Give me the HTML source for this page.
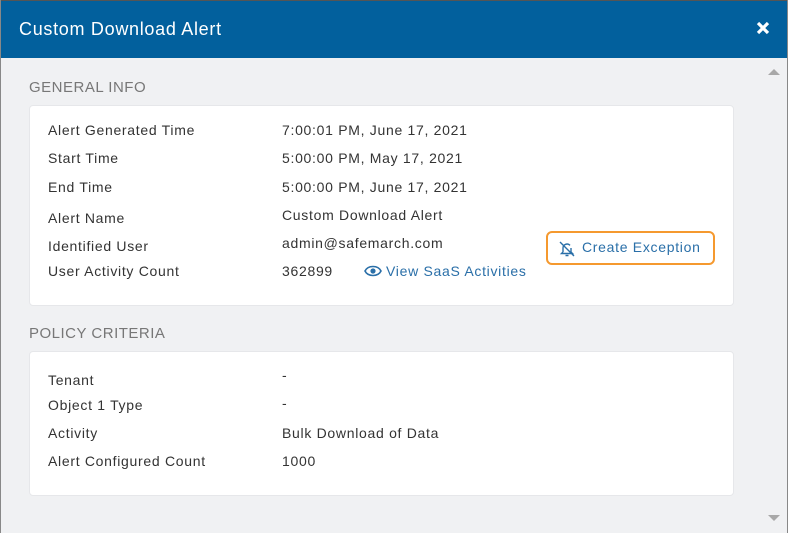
<!DOCTYPE html>
<html><head><style>
body{margin:0;width:788px;height:533px;overflow:hidden;background:#f0f1f3;font-family:"Liberation Sans",sans-serif;position:relative}
.hdr{position:absolute;left:0;top:0;width:788px;height:58px;background:#02609d;border-top:1px solid #555;box-sizing:border-box}
.hdr .t{position:absolute;left:19px;top:18px;color:#fff;font-size:18px;letter-spacing:.7px}
.x{position:absolute;left:755px;top:19px}
.sec{position:absolute;left:29px;color:#777;font-size:15px;letter-spacing:.5px}
.card{position:absolute;left:29px;width:705px;background:#fff;border-radius:4px;border:1px solid #e6e7ea;box-sizing:border-box}
.r{position:absolute;font-size:14px;color:#333;letter-spacing:.7px;white-space:nowrap}
.l{left:18px}.v{left:252px}
.link{color:#2a6fa8}
.btn{position:absolute;left:516px;top:125px;width:169px;height:34px;border:2px solid #f5992f;border-radius:6px;box-sizing:border-box}
</style></head><body>
<div class="hdr"><div class="t">Custom Download Alert</div>
<svg class="x" width="16" height="16" viewBox="0 0 16 16"><path d="M3 3L13 13M13 3L3 13" stroke="#fff" stroke-width="3.2"/></svg></div>
<svg style="position:absolute;left:768px;top:68px" width="12" height="8"><path d="M0 7L6 1L12 7Z" fill="#a8a8a8"/></svg>
<svg style="position:absolute;left:768px;top:514px" width="12" height="8"><path d="M0 1L6 7L12 1Z" fill="#a8a8a8"/></svg>
<div class="sec" style="top:79px">GENERAL INFO</div>
<div class="card" style="top:105px;height:201px">
<div class="r l" style="top:16px">Alert Generated Time</div><div class="r v" style="top:16px">7:00:01 PM, June 17, 2021</div>
<div class="r l" style="top:44px">Start Time</div><div class="r v" style="top:44px">5:00:00 PM, May 17, 2021</div>
<div class="r l" style="top:73px">End Time</div><div class="r v" style="top:73px">5:00:00 PM, June 17, 2021</div>
<div class="r l" style="top:104px">Alert Name</div><div class="r v" style="top:101px">Custom Download Alert</div>
<div class="r l" style="top:132px">Identified User</div><div class="r v" style="top:129px">admin@safemarch.com</div>
<div class="r l" style="top:157px">User Activity Count</div><div class="r v" style="top:157px">362899</div>
<svg style="position:absolute;left:334px;top:158px" width="18" height="14" viewBox="0 0 18 14"><path d="M1 7C4 1 14 1 17 7C14 13 4 13 1 7Z" fill="none" stroke="#2a6fa8" stroke-width="1.6"/><circle cx="9" cy="7" r="2.6" fill="#2a6fa8"/></svg>
<div class="r link" style="left:356px;top:157px">View SaaS Activities</div>
<div class="btn">
<svg style="position:absolute;left:10px;top:7px" width="18" height="18" viewBox="0 0 18 18" fill="none" stroke="#2a6fa8" stroke-width="1.4"><path d="M5 12V8a4 4 0 0 1 7-2.6M13 8v4l1.5 1.5h-11L5 12M7.5 15.5h3M2 2l14 14"/></svg>
<div class="r link" style="left:34px;top:6px">Create Exception</div></div>
</div>
<div class="sec" style="top:325px">POLICY CRITERIA</div>
<div class="card" style="top:351px;height:145px">
<div class="r l" style="top:20px">Tenant</div><div class="r v" style="top:15px">-</div>
<div class="r l" style="top:45px">Object 1 Type</div><div class="r v" style="top:43px">-</div>
<div class="r l" style="top:73px">Activity</div><div class="r v" style="top:73px">Bulk Download of Data</div>
<div class="r l" style="top:101px">Alert Configured Count</div><div class="r v" style="top:101px">1000</div>
</div>
<div style="position:absolute;right:0;top:0;width:1px;height:533px;background:#888"></div>
<div style="position:absolute;left:0;top:0;width:1px;height:533px;background:#888"></div>
</body></html>
